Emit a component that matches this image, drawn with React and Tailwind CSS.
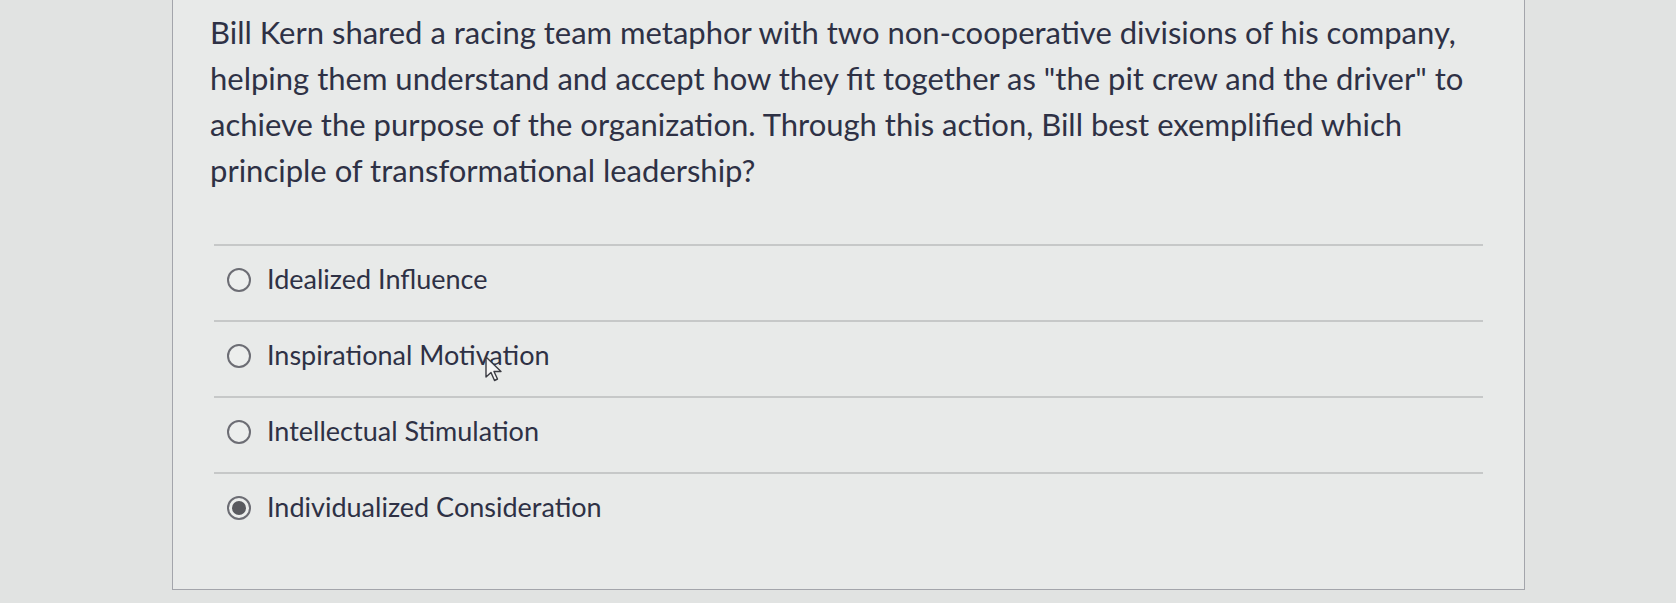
import { useState } from 'react'

const options = [
  'Idealized Influence',
  'Inspirational Motivation',
  'Intellectual Stimulation',
  'Individualized Consideration',
]

const Radio = ({ checked }) => (
  <span className="flex h-[24px] w-[24px] shrink-0 items-center justify-center rounded-full border-2 border-[#6c6d74] bg-[#eceeed]">
    {checked && <span className="h-[14px] w-[14px] rounded-full bg-[#595a5f]" />}
  </span>
)

const App = () => {
  const [selected, setSelected] = useState(3)

  return (
    <div
      className="h-[603px] w-full overflow-hidden bg-[#e1e3e2] pl-[172px] text-[#2e3145]"
      style={{ fontFamily: 'Lato, "Open Sans", sans-serif' }}
    >
      <div className="relative w-[1353px] border-x border-b border-[#a3a5ab] bg-[#e8eae9] pb-[41px]">
        {/* Question */}
        <p className="w-[1310px] pl-[37px] pt-[9px] text-[31px] leading-[46px]">
          Bill Kern shared a racing team metaphor with two non-cooperative divisions of his company, helping them understand and accept how they fit together as "the pit crew and the driver" to achieve the purpose of the organization. Through this action, Bill best exemplified which principle of transformational leadership?
        </p>

        {/* Answers */}
        <div className="mx-[41px] mt-[51px]">
          {options.map((label, i) => (
            <label
              key={label}
              onClick={() => setSelected(i)}
              className="flex h-[76px] cursor-pointer items-center gap-[16px] border-t-2 border-[#c6c8c8] pb-[7px] pl-[13px] text-[27px]"
            >
              <Radio checked={selected === i} />
              <span>{label}</span>
            </label>
          ))}
        </div>

        {/* mouse pointer */}
        <svg
          className="absolute left-[311px] top-[356px]"
          width="20"
          height="27"
          viewBox="0 0 20 27"
        >
          <path
            d="M2 1 L2 21 L7 16.5 L10.5 24.5 L13.5 23 L10 15.5 L17 15.5 Z"
            fill="#f4f4f4"
            stroke="#3a3b42"
            strokeWidth="1.4"
            strokeLinejoin="round"
          />
        </svg>
      </div>
    </div>
  )
}

export default App
